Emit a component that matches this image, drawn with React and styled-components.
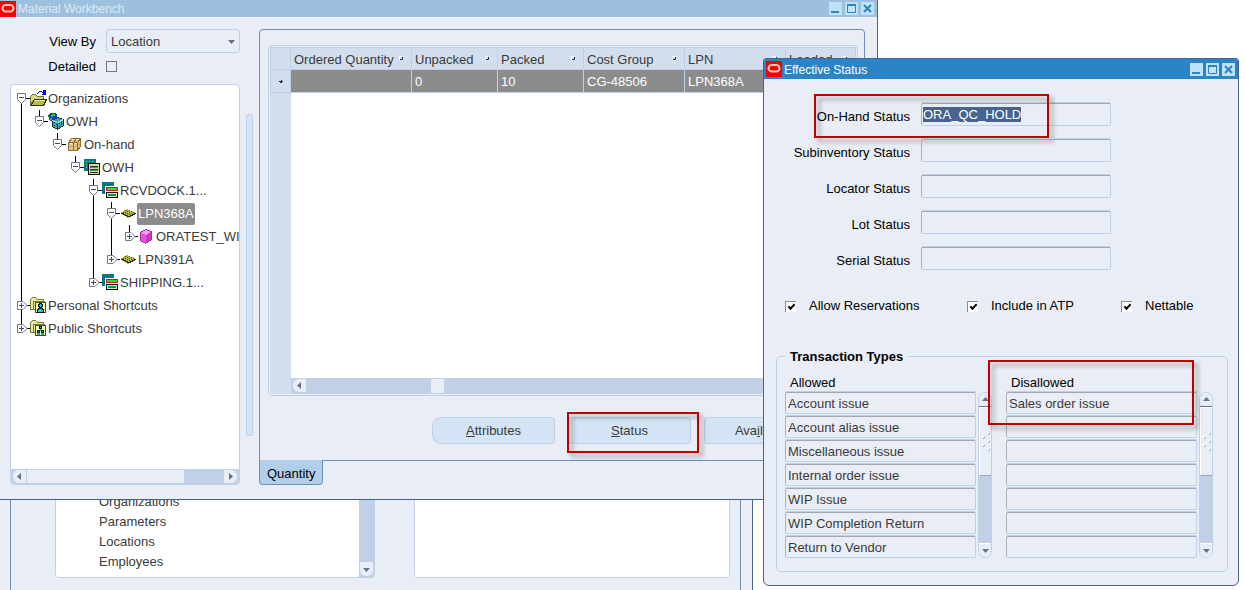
import { useEffect, useRef } from 'react'
import styled, { createGlobalStyle, ThemeProvider, css } from 'styled-components'

const theme = {
    colors: {
        surface: '#e9eef6',
        line: '#c0d1e7',
        header: '#d2deee',
        button: '#d3e4f4',
        frame: '#6f90b3',
        windowBorder: '#46648f',
        titleActive: '#2b84c5',
        titleInactive: '#9dc0df',
        tab: '#b1cfea',
        selected: '#8c8c8c',
        arrow: '#6b6f8a',
        text: '#3a3a3a',
        callout: '#c00000',
    },
    font: '"Liberation Sans", Arial, Helvetica, sans-serif',
}

const statuses = [
    { id: 'onhand', label: 'On-Hand Status', value: 'ORA_QC_HOLD' },
    { id: 'subinventory', label: 'Subinventory Status', value: '' },
    { id: 'locator', label: 'Locator Status', value: '' },
    { id: 'lot', label: 'Lot Status', value: '' },
    { id: 'serial', label: 'Serial Status', value: '' },
]

const flags = ['Allow Reservations', 'Include in ATP', 'Nettable']

const allowed = [
    'Account issue',
    'Account alias issue',
    'Miscellaneous issue',
    'Internal order issue',
    'WIP Issue',
    'WIP Completion Return',
    'Return to Vendor',
]

const disallowed = ['Sales order issue', '', '', '', '', '', '']

const columns = [
    { name: 'Ordered Quantity', value: '', width: 121 },
    { name: 'Unpacked', value: '0', width: 86 },
    { name: 'Packed', value: '10', width: 86 },
    { name: 'Cost Group', value: 'CG-48506', width: 101 },
    { name: 'LPN', value: 'LPN368A', width: 101 },
    { name: 'Loaded', value: '' },
]

// guides: levels whose vertical line runs past this row
const tree = [
    { name: 'Organizations', level: 0, icon: 'folder', open: true, down: true, guides: [] },
    { name: 'OWH', level: 1, icon: 'org', open: true, up: true, guides: [0] },
    { name: 'On-hand', level: 2, icon: 'boxes', open: true, up: true, guides: [0] },
    { name: 'OWH', level: 3, icon: 'sheets', open: true, up: true, guides: [0] },
    { name: 'RCVDOCK.1...', level: 4, icon: 'locator', open: true, up: true, down: true, guides: [0] },
    { name: 'LPN368A', level: 5, icon: 'pallet', open: true, up: true, down: true, guides: [0, 4], selected: true },
    { name: 'ORATEST_WIP', level: 6, icon: 'cube', up: true, guides: [0, 4, 5] },
    { name: 'LPN391A', level: 5, icon: 'pallet', up: true, guides: [0, 4] },
    { name: 'SHIPPING.1...', level: 4, icon: 'locator', up: true, guides: [0] },
    { name: 'Personal Shortcuts', level: 0, icon: 'personal', up: true, down: true, guides: [] },
    { name: 'Public Shortcuts', level: 0, icon: 'public', up: true, guides: [] },
]

const menu = ['Organizations', 'Parameters', 'Locations', 'Employees']

const icons = {
    folder: (
        <>
            <path d="M7 3h1V2h1V1h3v1h1V0h3v5h-4V4h1V3h-1V2H9v1H8v1H7z" fill="#0000f0" />
            <path d="M.5 14.500V6.500l2-2h3l2 2h6v3h-9z" fill="#d6d680" stroke="#77773a" />
            <path d="M1 15.500L4.500 9.500H16.500l-3 6z" fill="#b8b850" stroke="#33330f" />
            <path d="M5 10.500h10" stroke="#eeeeaa" />
        </>
    ),
    org: (
        <>
            <circle cx="5" cy="4" r="4.500" fill="#1438d8" />
            <path d="M3 1h4v2H5v1H3zM2 5h2v2H2z" fill="#18d030" />
            <path d="M0 4V2h1V1h2V0h4" stroke="#0a6a1a" fill="none" />
            <path d="M4.500 7.500l5-3 6 2v6l-6 4-5-3z" fill="#3aa8a8" stroke="#083a3a" />
            <path d="M4.500 7.500l5 2 6-3" stroke="#9adada" fill="none" />
            <path d="M9.500 9.500v7" stroke="#083a3a" />
            <path d="M6 9h1v1H6zM6 12h1v1H6zM8 11h1v1H8zM11 10h1v1h-1zM13 9h1v1h-1zM11 13h1v1h-1zM13 11h1v1h-1z" fill="#062e2e" />
        </>
    ),
    boxes: (
        <>
            <path d="M2.500 6.500l3-4h9v8l-3 4h-9z" fill="#e0c488" stroke="#8a6d35" />
            <path d="M2.500 6.500h9l3-4M11.500 6.500v8M7.500 6.500v8M7.500 6.500l3-4" fill="none" stroke="#8a6d35" />
            <path d="M3 10.500h8M12 9.500l2-2" stroke="#b6935299" />
            <path d="M4 7.500h2M9 7.500h2M6 3.500h2M11 3.500h2" stroke="#fbeecb" />
        </>
    ),
    sheets: (
        <>
            <path d="M0 0h12v12H0z" fill="#007d80" />
            <path d="M2 2h1v1H2zM5 2h1v1H5zM8 2h1v1H8zM2 5h1v1H2zM2 8h1v1H2z" fill="#d8c840" />
            <path d="M4.500 4.500h11v11h-11z" fill="#d8d8a0" stroke="#111" />
            <path d="M6 7.500h8M6 10.500h8M6 13.500h8" stroke="#333" />
            <path d="M6 8.500h8M6 11.500h8" stroke="#10b060" />
        </>
    ),
    locator: (
        <>
            <path d="M0 0h12v12H0z" fill="#007d80" />
            <path d="M2 2h1v1H2zM5 2h1v1H5zM8 2h1v1H8zM2 5h1v1H2zM2 8h1v1H2z" fill="#0b3c60" />
            <path d="M3 4h13v12H3z" fill="#fff" />
            <path d="M4.500 5.500h11v3h-11z" fill="#00f020" stroke="#d01040" />
            <path d="M4.500 10.500h11v5h-11z" fill="#e0e0b0" stroke="#111" />
            <path d="M6 12h8v2H6z" fill="#10905a" />
        </>
    ),
    pallet: (
        <>
            <path d="M0 8l7-4 9 4-8 5z" fill="#b4b450" />
            <path d="M1 8.500h2v1h2v1h2v1h3v-1h2v-1h2v-1h2" stroke="#2c2c0c" fill="none" />
            <path d="M5 5h1v1H5zM7 6h1v1H7zM9 5h1v1H9zM3 7h1v1H3zM5 7h1v1H5zM9 7h1v1H9zM11 6h1v1h-1zM7 8h1v1H7zM11 8h1v1h-1zM13 7h1v1h-1zM5 9h1v1H5zM9 9h1v1H9zM7 10h1v1H7z" fill="#4a4a18" />
        </>
    ),
    cube: (
        <>
            <path d="M2.500 4.500l5-3 6 2v8l-6 4-5-3z" fill="#ea50dc" stroke="#a828a0" />
            <path d="M3 5l5-3 5 2-5 3z" fill="#ff9cf4" />
            <path d="M8 7l5-3v7l-5 4z" fill="#c838c0" />
        </>
    ),
    personal: (
        <>
            <path d="M.5 12.500V2.500l2-2h3l2 2h6v3h-8v7z" fill="#e8e8a0" stroke="#7c7c2c" />
            <path d="M3.500 12V4.500h11" fill="none" stroke="#7c7c2c" />
            <path d="M5.500 5.500h10v10h-10z" fill="#ffffa8" stroke="#444" />
            <path d="M9 7h3v3H9z" fill="#10d0f0" />
            <path d="M8.500 7.500h1v-1h2v1h1v2h-1v1h-2v-1h-1z" fill="none" stroke="#111" />
            <path d="M7.500 15v-3h1v-1h4v1h1v3z" fill="#10d0f0" stroke="#111" />
        </>
    ),
    public: (
        <>
            <path d="M.5 12.500V2.500l2-2h3l2 2h6v3h-8v7z" fill="#e8e8a0" stroke="#7c7c2c" />
            <path d="M3.500 12V4.500h11" fill="none" stroke="#7c7c2c" />
            <path d="M5.500 5.500h10v10h-10z" fill="#ffffa8" stroke="#444" />
            <path d="M9.500 6.500h2v2h-2z" fill="#10d0f0" stroke="#111" />
            <path d="M7.500 10.500h2v2h-2zM11.500 10.500h2v2h-2z" fill="#10d0f0" stroke="#111" />
            <path d="M7 13h3v2H7zM11 13h3v2h-3zM10 9h1v2h-1z" fill="#10b0d0" />
        </>
    ),
}

const Logo = () => (
    <LogoIcon viewBox="0 0 16 16" aria-hidden="true">
        <path d="M0 0h16v16H0z" fill="#f80000" />
        <rect x="2.500" y="4" width="11" height="6.500" rx="3.250" fill="none" stroke="#ffc8c0" strokeWidth="2" />
    </LogoIcon>
)

const WindowControls = () => (
    <Controls>
        <ControlButton aria-label="Minimize">
            <svg width="13" height="13" viewBox="0 0 13 13"><path d="M2 10h8" stroke="#2b84c5" strokeWidth="2" /></svg>
        </ControlButton>
        <ControlButton aria-label="Maximize">
            <svg width="13" height="13" viewBox="0 0 13 13"><path d="M2.500 3v7.500h8V3" fill="none" stroke="#2b84c5" /><path d="M2 3h9" stroke="#2b84c5" strokeWidth="2" /></svg>
        </ControlButton>
        <ControlButton aria-label="Close">
            <svg width="13" height="13" viewBox="0 0 13 13"><path d="M3 3l7 7M10 3l-7 7" stroke="#2b84c5" strokeWidth="2" /></svg>
        </ControlButton>
    </Controls>
)

const TitleBar = ({ title, active }) => (
    <TitleRow $active={active}>
        <Logo />
        <Title $active={active}>{title}</Title>
        <WindowControls />
    </TitleRow>
)

const arrows = {
    up: 'M1 6h7L4.500 2z',
    down: 'M1 3h7L4.500 7z',
    left: 'M6 1v7L2 4.500z',
    right: 'M3 1v7L7 4.500z',
}

const Arrow = ({ to }) => (
    <svg width="9" height="9" viewBox="0 0 9 9" aria-hidden="true">
        <path d={arrows[to]} fill={theme.colors.arrow} />
    </svg>
)

const Expander = ({ open, up, down }) => (
    <svg width="13" height="23" viewBox="0 0 13 23" aria-hidden="true">
        {up && <path d="M4.500 0v7" stroke="#000" />}
        {down && <path d="M4.500 16v7" stroke="#000" />}
        <path d="M9 11.500h4" stroke="#000" />
        {open ?
            <path d="M.5 6.500h8v6l-4 4-4-4z" fill="#fff" stroke="#70748e" /> :
            <path d="M.5 7.500h5.500l4 4-4 4h-5.500z" fill="#fff" stroke="#70748e" />
        }
        <path d={open ? 'M2 10.500h5' : 'M2 11.500h5M4.500 9v5'} stroke="#444a68" />
    </svg>
)

const TreeItem = ({ item }) => (
    <TreeRow>
        {Array.from({ length: item.level }, (_, i) => <Guide key={i} $line={item.guides.includes(i)} />)}
        <Expander open={item.open} up={item.up} down={item.down} />
        <TreeIcon viewBox="0 0 17 17" shapeRendering="crispEdges">{icons[item.icon]}</TreeIcon>
        <TreeLabel $selected={item.selected}>{item.name}</TreeLabel>
    </TreeRow>
)

const FieldScrollbar = () => (
    <VScroll>
        <VScrollButton aria-label="Scroll up" $end="top"><Arrow to="up" /></VScrollButton>
        <VThumb>
            <svg width="10" height="20" viewBox="0 0 10 20" aria-hidden="true">
                <path d="M6 1h2M1 5h2M6 9h2M1 13h2M6 17h2" stroke="#fff" strokeWidth="2" />
                <path d="M7.500 2v1M2.500 6v1M7.500 10v1M2.500 14v1M7.500 18v1M8.500 1v1M3.500 5v1M8.500 9v1M3.500 13v1M8.500 17v1" stroke="#7f9cc0" />
            </svg>
        </VThumb>
        <VTrack />
        <VScrollButton aria-label="Scroll down" $end="bottom"><Arrow to="down" /></VScrollButton>
    </VScroll>
)

const TypeList = ({ title, items, children }) => (
    <TypeGroup>
        <TypeTitle>{title}</TypeTitle>
        <TypeFields>
            {items.map((item, i) => <TypeInput key={i} defaultValue={item} aria-label={`${title} ${i + 1}`} readOnly />)}
        </TypeFields>
        <FieldScrollbar />
        {children}
    </TypeGroup>
)

const Navigator = () => (
    <BackWindow>
        <BackFrame>
            <MenuBox>
                <MenuItems>
                    {menu.map((name) => <li key={name}><MenuLink href="#">{name}</MenuLink></li>)}
                </MenuItems>
                <MenuScroll>
                    <MenuScrollButton aria-label="Scroll down"><Arrow to="down" /></MenuScrollButton>
                </MenuScroll>
            </MenuBox>
            <EmptyBox />
        </BackFrame>
    </BackWindow>
)

const Workbench = () => (
    <MainWindow>
        <TitleBar title="Material Workbench" />
        <MainBody>
            <TreePane>
                <Filters>
                    <Label htmlFor="viewby">View By</Label>
                    <SelectWrap>
                        <Select id="viewby" defaultValue="Location">
                            <option>Location</option>
                        </Select>
                        <Arrow to="down" />
                    </SelectWrap>
                    <Label htmlFor="detailed">Detailed</Label>
                    <PlainCheck type="checkbox" id="detailed" />
                </Filters>
                <TreeBox>
                    <TreeList>
                        {tree.map((item, i) => <TreeItem key={i} item={item} />)}
                    </TreeList>
                    <HScroll>
                        <HScrollButton aria-label="Scroll left" $end="left"><Arrow to="left" /></HScrollButton>
                        <HThumb />
                        <HScrollButton aria-label="Scroll right" $end="right"><Arrow to="right" /></HScrollButton>
                    </HScroll>
                </TreeBox>
            </TreePane>
            <Splitter />
            <DetailPane>
                <DetailPanel>
                    <GridFrame>
                        <Grid>
                            <colgroup>
                                <col style={{ width: 20 }} />
                                {columns.map((col) => <col key={col.name} style={{ width: col.width }} />)}
                            </colgroup>
                            <thead>
                                <tr>
                                    <HeadCell />
                                    {columns.map((col) => (
                                        <HeadCell key={col.name}>
                                            <HeadContent>
                                                {col.name}
                                                <svg width="5" height="5" viewBox="0 0 5 5"><path d="M.5 4V.5H3" fill="none" stroke="#fff" /><path d="M1 3.500h2.500V1" fill="none" stroke="#12304f" /></svg>
                                            </HeadContent>
                                        </HeadCell>
                                    ))}
                                </tr>
                            </thead>
                            <tbody>
                                <tr>
                                    <MarkCell>
                                        <svg width="5" height="5" viewBox="0 0 5 5"><path d="M0 2.500h4M1 3.500h2M2 1.500h1" stroke="#12304f" /></svg>
                                    </MarkCell>
                                    {columns.map((col) => <Cell key={col.name}>{col.value}</Cell>)}
                                </tr>
                            </tbody>
                        </Grid>
                        <GridSpace />
                        <GridScroll>
                            <HScrollButton aria-label="Scroll left" $end="left"><Arrow to="left" /></HScrollButton>
                            <SmallThumb />
                        </GridScroll>
                    </GridFrame>
                    <Actions>
                        <ActionButton $first><u>A</u>ttributes</ActionButton>
                        <ActionWrap>
                            <ActionButton><u>S</u>tatus</ActionButton>
                            <StatusCallout />
                        </ActionWrap>
                        <ActionButton>Ava<u>i</u>lability</ActionButton>
                    </Actions>
                </DetailPanel>
                <Tab>Quantity</Tab>
            </DetailPane>
        </MainBody>
    </MainWindow>
)

const StatusDialog = () => {
    const onHand = useRef(null)

    useEffect(() => {
        onHand.current.focus()
        onHand.current.select()
    }, [])

    return (
        <DialogWindow>
            <TitleBar title="Effective Status" active />
            <DialogBody>
                <Fields>
                    {statuses.map((status, i) => (
                        <FieldRow key={status.id}>
                            <FieldLabel htmlFor={status.id}>{status.label}</FieldLabel>
                            <TextInput id={status.id} defaultValue={status.value} ref={i === 0 ? onHand : null} readOnly />
                            {i === 0 && <FieldCallout />}
                        </FieldRow>
                    ))}
                </Fields>
                <Flags>
                    {flags.map((flag) => (
                        <FlagLabel key={flag}>
                            <CheckBox type="checkbox" defaultChecked />
                            {flag}
                        </FlagLabel>
                    ))}
                </Flags>
                <Types>
                    <legend>Transaction Types</legend>
                    <TypeColumns>
                        <TypeList title="Allowed" items={allowed} />
                        <TypeList title="Disallowed" items={disallowed}>
                            <TypeCallout />
                        </TypeList>
                    </TypeColumns>
                </Types>
            </DialogBody>
        </DialogWindow>
    )
}

const App = () => (
    <ThemeProvider theme={theme}>
        <GlobalStyle />
        <Desktop>
            <Navigator />
            <Workbench />
            <StatusDialog />
        </Desktop>
    </ThemeProvider>
)

export default App

const GlobalStyle = createGlobalStyle`
    *, *::before, *::after {
        box-sizing: border-box;
    }

    body {
        margin: 0;
        background: #fff;
        font-family: ${({ theme }) => theme.font};
        font-size: 13px;
        color: ${({ theme }) => theme.colors.text};
    }

    button, input, select {
        font: inherit;
        color: inherit;
        margin: 0;
        padding: 0;
        border: 0;
        border-radius: 0;
        outline: none;
    }

    ul {
        list-style: none;
        margin: 0;
        padding: 0;
    }

    svg {
        display: block;
        flex-shrink: 0;
    }
`

const Desktop = styled.main`
    position: relative;
    min-height: 100vh;
    overflow: hidden;
`

/* windows */

const BackWindow = styled.section`
    position: absolute;
    left: 0;
    right: 492px;
    bottom: 0;
    padding: 0 11px 0 10px;
    background: ${({ theme }) => theme.colors.surface};
    border-right: 1px solid ${({ theme }) => theme.colors.windowBorder};
`

const BackFrame = styled.div`
    display: flex;
    gap: 39px;
    padding: 0 10px 12px 44px;
    border: solid ${({ theme }) => theme.colors.frame};
    border-width: 0 1px;
`

const MainWindow = styled.section`
    position: absolute;
    left: 0;
    right: 367px;
    top: 0;
    background: ${({ theme }) => theme.colors.surface};
    border: solid ${({ theme }) => theme.colors.windowBorder};
    border-width: 0 1px 1px 0;
`

const DialogWindow = styled.section`
    position: absolute;
    right: 6px;
    top: 58px;
    width: 476px;
    background: ${({ theme }) => theme.colors.surface};
    border: 1px solid ${({ theme }) => theme.colors.windowBorder};
    border-radius: 3px 3px 6px 6px;
    overflow: hidden;
`

const TitleRow = styled.header`
    display: flex;
    align-items: center;
    height: ${({ $active }) => ($active ? '20px' : '17px')};
    padding: 0 3px 0 ${({ $active }) => ($active ? '2px' : '0')};
    gap: 2px;
    background: ${({ theme, $active }) => ($active ? theme.colors.titleActive : theme.colors.titleInactive)};
`

const LogoIcon = styled.svg`
    width: 16px;
    height: 16px;
`

const Title = styled.h1`
    flex: 1;
    margin: 0;
    padding-top: 1px;
    font-size: 12px;
    font-weight: normal;
    line-height: 16px;
    color: ${({ $active }) => ($active ? '#fff' : '#dfeaf5')};
`

const Controls = styled.div`
    display: flex;
    gap: 3px;
`

const ControlButton = styled.button`
    width: 13px;
    height: 13px;
    background: #c0e2f7;
`

/* navigator behind */

const MenuBox = styled.div`
    display: flex;
    flex: 0 0 320px;
    background: #fff;
    border: 1px solid ${({ theme }) => theme.colors.line};
    border-radius: 0 0 4px 4px;
`

const MenuItems = styled.ul`
    flex: 1;
    padding: 4px 0 5px 43px;
`

const MenuLink = styled.a`
    display: block;
    line-height: 20px;
    color: ${({ theme }) => theme.colors.text};
    text-decoration: none;
`

const MenuScroll = styled.div`
    display: flex;
    align-items: flex-end;
    padding: 1px;
    background: ${({ theme }) => theme.colors.line};
`

const MenuScrollButton = styled.button`
    display: grid;
    place-items: center;
    width: 13px;
    height: 14px;
    background: ${({ theme }) => theme.colors.surface};
    border-radius: 0 0 6px 6px;
`

const EmptyBox = styled.div`
    flex: 1;
    background: #fff;
    border: 1px solid ${({ theme }) => theme.colors.line};
    border-radius: 0 0 4px 4px;
`

/* workbench */

const MainBody = styled.div`
    display: flex;
    gap: 6px;
    padding: 12px 12px 14px 10px;
`

const TreePane = styled.div`
    flex: 0 0 230px;
    min-width: 0;
`

const Filters = styled.div`
    display: grid;
    grid-template-columns: 86px 1fr;
    column-gap: 10px;
    row-gap: 5px;
    align-items: center;
    margin-bottom: 10px;
`

const Label = styled.label`
    padding-top: 2px;
    color: #000;
    text-align: right;
    line-height: 14px;
`

const SelectWrap = styled.div`
    display: flex;
    align-items: center;
    height: 24px;
    padding-right: 3px;
    border: 1px solid ${({ theme }) => theme.colors.line};
    border-radius: 3px;
`

const Select = styled.select`
    appearance: none;
    flex: 1;
    padding-left: 4px;
    background: transparent;
`

const PlainCheck = styled.input`
    appearance: none;
    width: 11px;
    height: 11px;
    border: 1px solid #777;
`

const TreeBox = styled.div`
    background: #fff;
    border: 1px solid ${({ theme }) => theme.colors.line};
    border-radius: 4px;
    overflow: hidden;
`

const TreeList = styled.ul`
    min-height: 384px;
    padding: 2px 0 0 6px;
`

const TreeRow = styled.li`
    display: flex;
    align-items: center;
    height: 23px;
    overflow: hidden;
    white-space: nowrap;
`

const Guide = styled.span`
    flex: 0 0 18px;
    height: 23px;

    ${({ $line }) => $line && css`
        &::before {
            content: '';
            display: block;
            width: 1px;
            height: 23px;
            margin-left: 4px;
            background: #000;
        }
    `}
`

const TreeIcon = styled.svg`
    width: 17px;
    height: 17px;
`

const TreeLabel = styled.span`
    padding: 0 1px;
    line-height: 22px;
    border-radius: 2px;
    background: ${({ theme, $selected }) => ($selected ? theme.colors.selected : 'transparent')};
    color: ${({ theme, $selected }) => ($selected ? '#fff' : theme.colors.text)};
`

const HScroll = styled.div`
    display: flex;
    height: 15px;
    padding: 1px 2px;
    background: ${({ theme }) => theme.colors.line};
`

const HScrollButton = styled.button`
    display: grid;
    place-items: center;
    width: 13px;
    height: 13px;
    background: ${({ theme }) => theme.colors.surface};
    border-radius: ${({ $end }) => ($end === 'left' ? '6px 0 0 6px' : '0 6px 6px 0')};
`

const HThumb = styled.div`
    flex: 1;
    margin: 0 40px 0 1px;
    background: ${({ theme }) => theme.colors.surface};
`

const Splitter = styled.div`
    flex: 0 0 7px;
    margin: 85px 0 49px;
    background: ${({ theme }) => theme.colors.button};
    border: 1px solid ${({ theme }) => theme.colors.line};
    border-radius: 2px;
`

const DetailPane = styled.div`
    display: flex;
    flex-direction: column;
    align-items: flex-start;
    flex: 1;
    min-width: 0;
`

const DetailPanel = styled.div`
    display: flex;
    flex-direction: column;
    flex: 1;
    width: 100%;
    padding: 15px 6px 16px 8px;
    border: 1px solid ${({ theme }) => theme.colors.frame};
    border-radius: 4px 4px 4px 0;
`

const GridFrame = styled.div`
    display: flex;
    flex-direction: column;
    flex: 1;
    padding: 1px;
    border: 1px solid ${({ theme }) => theme.colors.line};
    border-radius: 4px;
`

const Grid = styled.table`
    width: 100%;
    table-layout: fixed;
    border-collapse: collapse;
`

const HeadCell = styled.th`
    height: 22px;
    padding: 2px 7px 0 3px;
    border: 1px solid ${({ theme }) => theme.colors.line};
    background: ${({ theme }) => theme.colors.header};
    font-weight: normal;
    text-align: left;
    white-space: nowrap;
`

const HeadContent = styled.span`
    display: flex;
    justify-content: space-between;
    line-height: 19px;

    svg {
        margin-top: 6px;
    }
`

const MarkCell = styled.td`
    padding: 0 6px 0 8px;
    background: ${({ theme }) => theme.colors.header};
    border: 1px solid ${({ theme }) => theme.colors.line};
`

const Cell = styled.td`
    height: 23px;
    padding: 0 3px;
    background: ${({ theme }) => theme.colors.selected};
    border: 1px solid ${({ theme }) => theme.colors.line};
    color: #fff;
`

const GridSpace = styled.div`
    flex: 1;
    background: #fff;
    border-left: 21px solid ${({ theme }) => theme.colors.header};
`

const GridScroll = styled.div`
    display: flex;
    height: 16px;
    padding: 1px 2px;
    background: ${({ theme }) => theme.colors.line};
    border-left: 21px solid ${({ theme }) => theme.colors.header};
    border-radius: 0 0 4px 4px;
`

const SmallThumb = styled.div`
    width: 13px;
    margin-left: 125px;
    background: ${({ theme }) => theme.colors.surface};
`

const Actions = styled.div`
    display: flex;
    justify-content: flex-end;
    gap: 13px;
    margin-top: 21px;
    padding-right: 31px;
`

const ActionWrap = styled.div`
    position: relative;
`

const ActionButton = styled.button`
    width: 123px;
    height: 27px;
    background: ${({ theme }) => theme.colors.button};
    border: 1px solid ${({ theme }) => theme.colors.line};
    border-radius: ${({ $first }) => ($first ? '9px 3px 3px 9px' : '3px')};
`

const Tab = styled.button`
    z-index: 1;
    height: 25px;
    margin-top: -1px;
    padding: 2px 7px 0;
    color: #000;
    background: ${({ theme }) => theme.colors.tab};
    border: solid ${({ theme }) => theme.colors.frame};
    border-width: 0 1px 1px;
    border-radius: 0 0 4px 4px;
`

/* status dialog */

const DialogBody = styled.div`
    padding: 24px 10px 13px 12px;
`

const Fields = styled.div`
    display: grid;
    row-gap: 13px;
`

const FieldRow = styled.div`
    position: relative;
    display: grid;
    grid-template-columns: 134px 190px;
    column-gap: 11px;
    align-items: center;
`

const FieldLabel = styled(Label)`
    padding-top: 4px;
`

const inputBox = css`
    height: 23px;
    padding: 0 1px;
    background: transparent;
    border: 1px solid ${({ theme }) => theme.colors.line};
    border-top-color: #a3a7ae;
    border-left-color: #a9b3c2;
    border-radius: 2px;
    box-shadow: 0 -1px ${({ theme }) => theme.colors.line};

    &::selection {
        background: #46648f;
        color: #fff;
    }
`

const TextInput = styled.input`
    ${inputBox}
`

const Flags = styled.div`
    display: grid;
    grid-template-columns: 182px 154px auto;
    margin: 26px 0 30px;
    padding-left: 9px;
`

const FlagLabel = styled.label`
    display: flex;
    align-items: center;
    gap: 13px;
    line-height: 20px;
    color: #000;
`

const CheckBox = styled.input`
    appearance: none;
    display: grid;
    place-items: center;
    width: 11px;
    height: 11px;
    background: #fff;
    border: solid #8c8c8c;
    border-width: 1px 0 0 1px;

    &:checked::after {
        content: '';
        width: 7px;
        height: 4px;
        margin-bottom: 2px;
        border: solid #000;
        border-width: 0 0 2px 2px;
        transform: rotate(-45deg);
    }
`

const Types = styled.fieldset`
    min-width: 0;
    margin: 0;
    padding: 7px 8px 13px;
    border: 1px solid ${({ theme }) => theme.colors.line};
    border-radius: 5px;

    legend {
        padding: 1px 5px 0;
        line-height: 19px;
        font-weight: bold;
        color: #000;
    }
`

const TypeColumns = styled.div`
    display: flex;
    gap: 14px;
`

const TypeGroup = styled.div`
    position: relative;
    display: grid;
    grid-template-columns: 191px 14px;
    column-gap: 2px;
`

const TypeTitle = styled.span`
    grid-column: 1 / -1;
    padding: 1px 0 0 5px;
    line-height: 18px;
    color: #000;
`

const TypeFields = styled.div`
    display: grid;
    row-gap: 2px;
`

const TypeInput = styled.input`
    ${inputBox}
    height: 22px;
    width: 100%;
    padding: 0 2px;
`

const VScroll = styled.div`
    display: flex;
    flex-direction: column;
    border: 1px solid ${({ theme }) => theme.colors.line};
    border-radius: 7px;
    overflow: hidden;
`

const VScrollButton = styled.button`
    display: grid;
    place-items: center;
    height: 14px;
    background: ${({ theme }) => theme.colors.surface};
    border: solid ${({ theme, $end }) => ($end === 'top' ? theme.colors.arrow : '#fff')};
    border-width: ${({ $end }) => ($end === 'top' ? '0 0 1px' : '1px 0 0')};
`

const VThumb = styled.div`
    display: grid;
    place-items: center;
    height: 69px;
    background: ${({ theme }) => theme.colors.surface};
    border: solid #fff;
    border-width: 1px 0 1px 1px;
    border-bottom-color: #8fa9c8;
`

const VTrack = styled.div`
    flex: 1;
    background: ${({ theme }) => theme.colors.line};
`

/* red callouts drawn over the windows */

const Callout = styled.div`
    position: absolute;
    border: 2px solid ${({ theme }) => theme.colors.callout};
    filter: drop-shadow(4px 4px 2px rgba(0, 0, 0, 0.35));
    pointer-events: none;
`

const FieldCallout = styled(Callout)`
    left: 38px;
    top: -9px;
    width: 235px;
    height: 44px;
`

const StatusCallout = styled(Callout)`
    inset: -5px -8px -9px -1px;
`

const TypeCallout = styled(Callout)`
    left: -18px;
    top: -13px;
    width: 206px;
    height: 65px;
`
